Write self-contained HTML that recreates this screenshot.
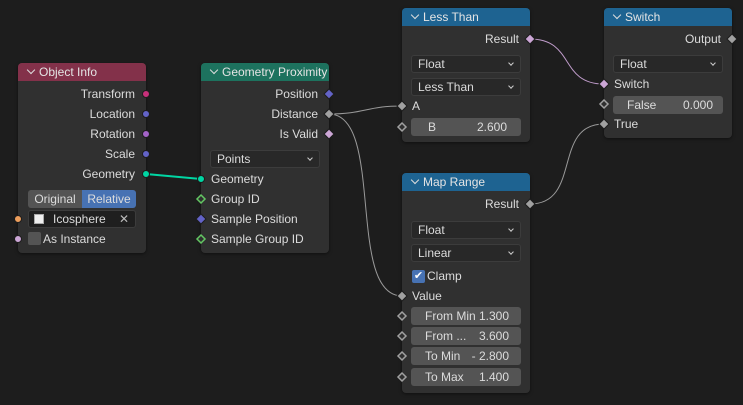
<!DOCTYPE html>
<html><head><meta charset="utf-8"><style>
*{box-sizing:border-box;margin:0;padding:0}
body{width:743px;height:405px;background:#1d1d1d;font-family:"Liberation Sans",sans-serif;font-size:12px;color:#dcdcdc;position:relative;overflow:hidden}
.n{position:absolute;background:#303030;border-radius:4px;box-shadow:0 1px 3px rgba(0,0,0,.5)}
.h{height:18px;border-radius:4px 4px 0 0;padding-left:21px;line-height:18px;color:#e4e4e4;font-size:12px;position:relative;white-space:nowrap}
.h:before{content:"";position:absolute;left:10px;top:4px;width:5px;height:5px;border-right:1px solid #ddd;border-bottom:1px solid #ddd;transform:rotate(45deg)}
.t{position:absolute;line-height:14px;white-space:nowrap}
.r{text-align:right}
.dd{position:absolute;height:18px;background:#282828;border:1px solid #3c3c3c;border-radius:3px;line-height:16px;padding-left:6px}
.dd:after{content:"";position:absolute;right:7px;top:5px;width:3px;height:3px;border-right:1px solid #ccc;border-bottom:1px solid #ccc;transform:rotate(45deg)}
.dd.o:after{display:none}
.f{position:absolute;height:18px;background:#545454;border-radius:3px;line-height:18px}
svg{position:absolute;left:0;top:0}
</style></head><body>
<svg width="743" height="405" style="z-index:0">
<g fill="none" stroke-width="1">
<path d="M146 174 L201 179" stroke="#00d6a3" stroke-width="2"/>
<path d="M329 114 C365 114,366 106,402 106" stroke="#9a9a9a"/>
<path d="M329 114 C385 114,346 296,402 296" stroke="#9a9a9a"/>
<path d="M530 39 C575 39,559 84,604 84" stroke="#c09ccb"/>
<path d="M530 204 C582 204,552 124,604 124" stroke="#9a9a9a"/>
</g></svg>

<div class="n" style="left:18px;top:63px;width:128px;height:190px">
<div class="h" style="background:#83314a">Object Info</div>
<div class="t r" style="right:11px;top:24px">Transform</div>
<div class="t r" style="right:11px;top:44px">Location</div>
<div class="t r" style="right:11px;top:64px">Rotation</div>
<div class="t r" style="right:11px;top:84px">Scale</div>
<div class="t r" style="right:11px;top:104px">Geometry</div>
<div class="f" style="left:10px;top:127px;width:54px;border-radius:3px 0 0 3px;text-align:center">Original</div>
<div class="f" style="left:64px;top:127px;width:54px;background:#4772b3;border-radius:0 3px 3px 0;text-align:center">Relative</div>
<div class="dd o" style="left:10px;top:147px;width:108px;background:#1f1f1f;padding-left:24px">Icosphere<span style="position:absolute;left:5px;top:3px;width:10px;height:10px;border:1px solid #aaa;background:#eee;outline:1px solid #1f1f1f"></span><span style="position:absolute;right:6px;top:0;color:#bbb">✕</span></div>
<div style="position:absolute;left:10px;top:169px;width:13px;height:13px;background:#545454;border-radius:2px"></div>
<div class="t" style="left:25px;top:169px">As Instance</div>
</div>

<div class="n" style="left:201px;top:63px;width:128px;height:190px">
<div class="h" style="background:#1d725e">Geometry Proximity</div>
<div class="t r" style="right:11px;top:24px">Position</div>
<div class="t r" style="right:11px;top:44px">Distance</div>
<div class="t r" style="right:11px;top:64px">Is Valid</div>
<div class="dd" style="left:9px;top:87px;width:110px">Points</div>
<div class="t" style="left:10px;top:109px">Geometry</div>
<div class="t" style="left:10px;top:129px">Group ID</div>
<div class="t" style="left:10px;top:149px">Sample Position</div>
<div class="t" style="left:10px;top:169px">Sample Group ID</div>
</div>

<div class="n" style="left:402px;top:8px;width:128px;height:134px">
<div class="h" style="background:#1e6391">Less Than</div>
<div class="t r" style="right:11px;top:24px">Result</div>
<div class="dd" style="left:9px;top:47px;width:110px">Float</div>
<div class="dd" style="left:9px;top:70px;width:110px">Less Than</div>
<div class="t" style="left:10px;top:91px">A</div>
<div class="f" style="left:9px;top:110px;width:110px"><span style="position:absolute;left:17px">B</span><span style="position:absolute;right:14px">2.600</span></div>
</div>

<div class="n" style="left:604px;top:8px;width:128px;height:130px">
<div class="h" style="background:#1e6391">Switch</div>
<div class="t r" style="right:11px;top:24px">Output</div>
<div class="dd" style="left:9px;top:47px;width:110px">Float</div>
<div class="t" style="left:10px;top:69px">Switch</div>
<div class="f" style="left:9px;top:88px;width:110px"><span style="position:absolute;left:14px">False</span><span style="position:absolute;right:10px">0.000</span></div>
<div class="t" style="left:10px;top:109px">True</div>
</div>

<div class="n" style="left:402px;top:173px;width:128px;height:220px">
<div class="h" style="background:#1e6391">Map Range</div>
<div class="t r" style="right:11px;top:24px">Result</div>
<div class="dd" style="left:9px;top:48px;width:110px">Float</div>
<div class="dd" style="left:9px;top:71px;width:110px">Linear</div>
<div style="position:absolute;left:10px;top:97px;width:13px;height:13px;background:#4772b3;border-radius:2px;color:#fff;font-size:11px;line-height:13px;text-align:center">✔</div>
<div class="t" style="left:25px;top:96px">Clamp</div>
<div class="t" style="left:10px;top:116px">Value</div>
<div class="f" style="left:9px;top:134px;width:110px"><span style="position:absolute;left:14px">From Min</span><span style="position:absolute;right:12px">1.300</span></div>
<div class="f" style="left:9px;top:154px;width:110px"><span style="position:absolute;left:14px">From ...</span><span style="position:absolute;right:12px">3.600</span></div>
<div class="f" style="left:9px;top:174px;width:110px"><span style="position:absolute;left:14px">To Min</span><span style="position:absolute;right:12px">- 2.800</span></div>
<div class="f" style="left:9px;top:195px;width:110px"><span style="position:absolute;left:14px">To Max</span><span style="position:absolute;right:12px">1.400</span></div>
</div>

<svg width="743" height="405" style="z-index:5">
<g stroke="#1d1d1d" stroke-width="1">
<circle cx="146" cy="94" r="3.5" fill="#c7307a"/>
<circle cx="146" cy="114" r="3.5" fill="#6363c7"/>
<circle cx="146" cy="134" r="3.5" fill="#a363c7"/>
<circle cx="146" cy="154" r="3.5" fill="#6363c7"/>
<circle cx="146" cy="174" r="3.5" fill="#00d6a3"/>
<circle cx="18" cy="219" r="3.5" fill="#ed9e5c"/>
<circle cx="18" cy="239" r="3.5" fill="#cca6d6"/>
<circle cx="201" cy="179" r="3.5" fill="#00d6a3"/>
</g>
<g stroke="#1d1d1d" stroke-width="1">
<path d="M329 89l5 5-5 5-5-5z" fill="#6363c7"/>
<path d="M329 109l5 5-5 5-5-5z" fill="#a1a1a1"/>
<path d="M329 129l5 5-5 5-5-5z" fill="#cca6d6"/>
<path d="M201 214l5 5-5 5-5-5z" fill="#6363c7"/>
<path d="M530 34l5 5-5 5-5-5z" fill="#cca6d6"/>
<path d="M402 101l5 5-5 5-5-5z" fill="#a1a1a1"/>
<path d="M732 34l5 5-5 5-5-5z" fill="#a1a1a1"/>
<path d="M604 79l5 5-5 5-5-5z" fill="#cca6d6"/>
<path d="M604 119l5 5-5 5-5-5z" fill="#a1a1a1"/>
<path d="M530 199l5 5-5 5-5-5z" fill="#a1a1a1"/>
<path d="M402 291l5 5-5 5-5-5z" fill="#a1a1a1"/>
</g>
<g stroke-width="1.5" fill="#303030">
<path d="M201 195l4 4-4 4-4-4z" stroke="#63c763"/>
<path d="M201 235l4 4-4 4-4-4z" stroke="#63c763"/>
<path d="M402 123l4 4-4 4-4-4z" stroke="#a1a1a1"/>
<path d="M604 100l4 4-4 4-4-4z" stroke="#a1a1a1"/>
<path d="M402 312l4 4-4 4-4-4z" stroke="#a1a1a1"/>
<path d="M402 332l4 4-4 4-4-4z" stroke="#a1a1a1"/>
<path d="M402 352l4 4-4 4-4-4z" stroke="#a1a1a1"/>
<path d="M402 373l4 4-4 4-4-4z" stroke="#a1a1a1"/>
</g>
</svg>
</body></html>
